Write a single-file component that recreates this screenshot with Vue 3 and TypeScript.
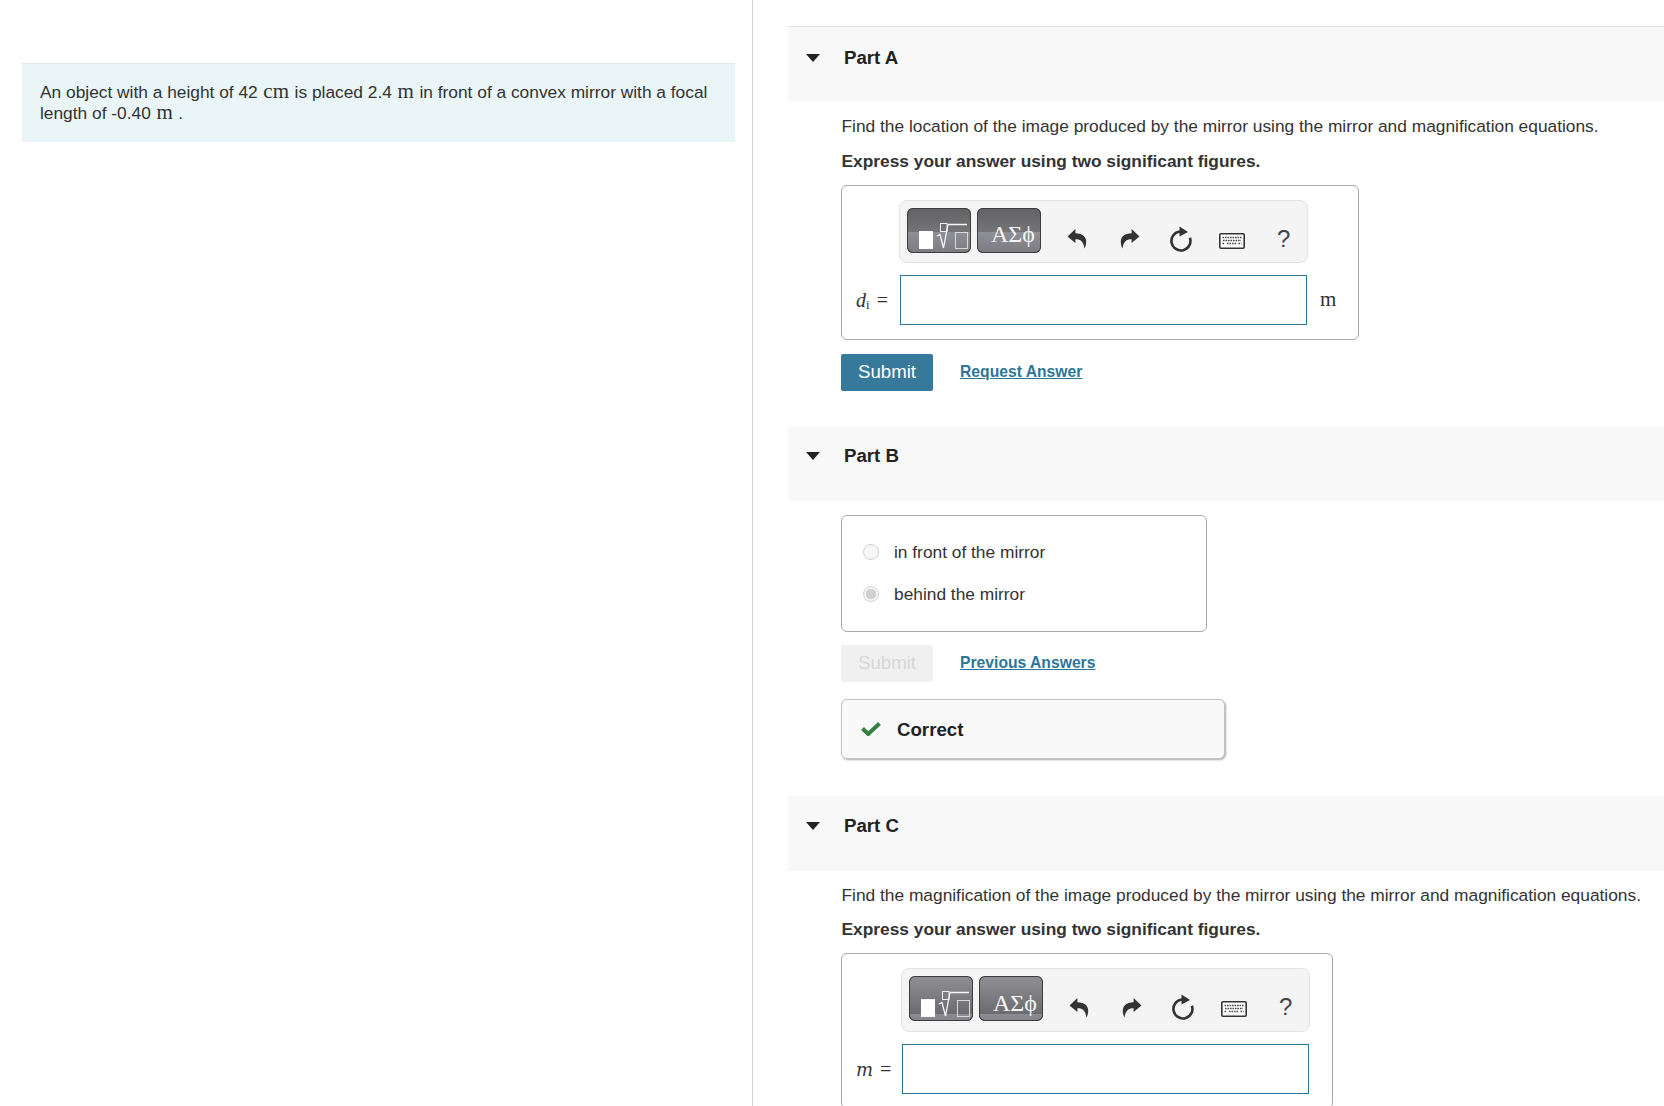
<template>
  <div class="page">
    <aside class="intro">
      <div class="intro__box">
        An object with a height of 42 <span class="unit">cm</span> is placed 2.4 <span class="unit">m</span> in front of a convex mirror with a focal length of -0.40 <span class="unit">m</span> .
      </div>
    </aside>

    <main class="parts">
      <section v-for="part in parts" :key="part.name" class="part">
        <header :class="['part__head', { 'part__head--first': part.name === 'Part A' }]">
          <span class="part__caret"></span>
          <h2 class="part__title">{{ part.name }}</h2>
        </header>

        <div class="part__body">
          <template v-if="part.kind === 'math'">
            <p class="prompt">{{ part.prompt }}</p>
            <p class="prompt prompt--strong">Express your answer using two significant figures.</p>

            <div :class="['answer', `answer--${part.id}`]">
              <div :class="['toolbar', `toolbar--${part.id}`]">
                <span class="tpl tpl--root">
                  <svg width="64" height="45" viewBox="0 0 64 45">
                    <rect x="12" y="23" width="14" height="18" fill="#fff" />
                    <rect x="33.5" y="15.5" width="6.5" height="8" fill="none" stroke="#eee" />
                    <path d="M30 28 L33 26.5 L36.5 40 L41 16.5 H60" fill="none" stroke="#f6f6f6" stroke-width="1.3" />
                    <rect x="48.5" y="24.5" width="12" height="16" fill="none" stroke="#d8d8da" />
                  </svg>
                </span>
                <span class="tpl tpl--greek">ΑΣϕ</span>

                <span class="tool">
                  <svg width="21" height="21" viewBox="0 0 20 20"><path d="M8 1 L0.5 8.2 L8 14.2 V10.8 C12.5 10.6 15.6 12.6 16.6 19.6 C20.4 12.2 18 5.2 8 5 Z" fill="#333" /></svg>
                </span>
                <span class="tool">
                  <svg class="flip" width="21" height="21" viewBox="0 0 20 20"><path d="M8 1 L0.5 8.2 L8 14.2 V10.8 C12.5 10.6 15.6 12.6 16.6 19.6 C20.4 12.2 18 5.2 8 5 Z" fill="#333" /></svg>
                </span>
                <span class="tool">
                  <svg width="24" height="26" viewBox="0 0 24 26">
                    <path d="M20.9 11.8 A9.5 9.5 0 1 1 11 5.5" fill="none" stroke="#333" stroke-width="2.6" />
                    <path d="M10.5 0.5 L19 6 L10.5 10.5 Z" fill="#333" />
                  </svg>
                </span>
                <span class="tool tool--keys">
                  <svg width="26" height="16" viewBox="0 0 26 16">
                    <rect x="0.8" y="0.8" width="24.4" height="14.4" rx="1.2" fill="#fff" stroke="#333" stroke-width="1.6" />
                    <path d="M3.5 4.5 H22.5 M4 7.5 H22 M3.5 10.5 H6 M8 10.5 H17.5 M19.5 10.5 H22.5" fill="none" stroke="#444" stroke-width="1.4" stroke-dasharray="1.6 0.9" />
                  </svg>
                </span>
                <span class="tool tool--help">?</span>
              </div>

              <label class="answer__label"><i>{{ part.symbol }}</i><sub v-if="part.sub">{{ part.sub }}</sub> <span class="answer__eq">=</span></label>
              <input class="answer__input" type="text" aria-label="answer" />
              <span class="unit answer__unit">{{ part.unit }}</span>
            </div>

            <div v-if="part.action" class="actions">
              <button class="btn" type="button">Submit</button>
              <a class="actions__link" href="#">{{ part.action }}</a>
            </div>
          </template>

          <template v-else>
            <div class="choices">
              <label v-for="c in part.choices" :key="c.text" class="choice">
                <span :class="['radio', { 'radio--on': c.on }]"></span>
                {{ c.text }}
              </label>
            </div>

            <div class="actions actions--tight">
              <button class="btn btn--off" type="button" disabled>Submit</button>
              <a class="actions__link" href="#">{{ part.action }}</a>
            </div>

            <div class="result">
              <svg width="20" height="15" viewBox="0 0 20 15"><path d="M1.5 7.5 L7.2 13 L18.5 2.5" fill="none" stroke="#34813f" stroke-width="4" /></svg>
              <strong>Correct</strong>
            </div>
          </template>
        </div>
      </section>
    </main>
  </div>
</template>

<script setup lang="ts">
interface Choice {
  text: string
  on: boolean
}

interface Part {
  id: string
  name: string
  kind: 'math' | 'choice'
  prompt?: string
  symbol?: string
  sub?: string
  unit?: string
  action?: string
  choices?: Choice[]
}

const parts: Part[] = [
  {
    id: 'a',
    name: 'Part A',
    kind: 'math',
    prompt: 'Find the location of the image produced by the mirror using the mirror and magnification equations.',
    symbol: 'd',
    sub: 'i',
    unit: 'm',
    action: 'Request Answer'
  },
  {
    id: 'b',
    name: 'Part B',
    kind: 'choice',
    action: 'Previous Answers',
    choices: [
      { text: 'in front of the mirror', on: false },
      { text: 'behind the mirror', on: true }
    ]
  },
  {
    id: 'c',
    name: 'Part C',
    kind: 'math',
    prompt: 'Find the magnification of the image produced by the mirror using the mirror and magnification equations.',
    symbol: 'm'
  }
]
</script>

<style>
html,
body {
  margin: 0;
  background: #fff;
  overflow: hidden;
}
</style>

<style scoped>
.page {
  display: flex;
  height: 1106px;
  overflow: hidden;
  font-family: "Liberation Sans", Arial, sans-serif;
  font-size: 17.33px;
  color: #333;
}

.intro {
  box-sizing: border-box;
  flex: 0 0 753px;
  padding: 63px 17px 0 22px;
  border-right: 1px solid #ccd2d6;
}

.intro__box {
  box-sizing: border-box;
  height: 79px;
  padding: 18px 20px 0 18px;
  background: #e9f5f7;
  border-top: 1px solid #dfe8ea;
  line-height: 21px;
}

.intro__box .unit {
  padding: 0 0.8px;
  line-height: 0;
}

.unit {
  font-family: "Liberation Serif", "Times New Roman", serif;
  font-size: 21px;
}

.parts {
  flex: 1;
  min-width: 0;
  padding: 26px 0 0 35px;
}

.part__head {
  box-sizing: border-box;
  display: flex;
  align-items: flex-start;
  height: 75px;
  padding-top: 19px;
  background: #f8f8f8;
}

.part__head--first {
  height: 76px;
  padding-top: 20px;
  border-top: 1px solid #e2e2e2;
}

.part__caret {
  margin: 7px 24px 0 18px;
  border-left: 7px solid transparent;
  border-right: 7px solid transparent;
  border-top: 8px solid #222;
}

.part__title {
  margin: 0;
  font-size: 18.67px;
  line-height: 21px;
  font-weight: 700;
  color: #222;
}

.part__body {
  padding-left: 53px;
}

.prompt {
  margin: 0;
  padding: 12px 0 0 0.5px;
  line-height: 24px;
  white-space: nowrap;
}

.prompt--strong {
  padding-top: 11px;
  font-weight: 700;
}

.part:last-child .prompt--strong {
  padding-top: 10px;
}

.answer {
  box-sizing: border-box;
  display: grid;
  grid-template-columns: 43px 409px 1fr;
  row-gap: 12px;
  align-items: center;
  margin-top: 12px;
  padding: 14px 0 14px 14px;
  border: 1px solid #aaa;
  border-radius: 6px;
}

.answer--a {
  width: 518px;
}

.answer--c {
  width: 492px;
  grid-template-columns: 45px 409px 1fr;
}

.toolbar {
  box-sizing: border-box;
  grid-column: 2;
  grid-row: 1;
  display: flex;
  align-items: center;
  height: 63px;
  padding: 7px 0 0 7px;
  background: #f4f4f4;
  border: 1px solid #e2e2e2;
  border-radius: 8px;
  align-self: start;
}

.toolbar--c {
  height: 64px;
}

.tpl {
  box-sizing: border-box;
  flex: none;
  align-self: flex-start;
  width: 64px;
  height: 45px;
  margin-right: 6px;
  border-radius: 6px;
  box-shadow: inset 0 0 0 1px #3c3c3e;
  overflow: hidden;
  background: linear-gradient(#626265 0, #757578 53%, #8f8f96 53%, #7b7b80 100%);
}

.toolbar--c .tpl {
  background: linear-gradient(#909094 0, #6c6c70 84%, #8b8b92 84%, #85858b 100%);
}

.tpl svg {
  display: block;
}

.tpl--greek {
  padding: 13px 0 0 14px;
  font-family: "Liberation Serif", "Times New Roman", serif;
  font-size: 24px;
  line-height: 27px;
  color: #f4f4f4;
}

.toolbar--c .tpl--greek {
  padding-top: 14px;
}

.tool {
  flex: 0 0 51.5px;
  display: flex;
  justify-content: center;
  align-items: center;
  height: 26px;
  margin-top: 7px;
}

.tool:nth-child(3) {
  margin-left: 5px;
}

.tool--keys svg {
  margin-top: 4px;
}

.tool--help {
  font-size: 24px;
  color: #444;
}

.flip {
  transform: scaleX(-1);
}

.answer__label {
  grid-column: 1;
  grid-row: 2;
  font-family: "Liberation Serif", "Times New Roman", serif;
  font-size: 20px;
  color: #333;
  white-space: nowrap;
}

.answer--c .answer__label i {
  font-family: "DejaVu Serif", serif;
  font-size: 18px;
}

.answer__label sub {
  font-size: 13px;
  line-height: 0;
  vertical-align: -2px;
}

.answer__eq {
  margin-left: 2px;
  font-size: 20px;
}

.answer__input {
  grid-column: 2;
  grid-row: 2;
  box-sizing: border-box;
  justify-self: center;
  width: 407px;
  height: 50px;
  margin: 0;
  padding: 0 8px;
  background: #fff;
  border: 1px solid #2e7699;
  border-radius: 0;
  outline: none;
}

.answer__unit {
  grid-column: 3;
  grid-row: 2;
  padding: 0 0 2px 12px;
  color: #333;
}

.actions {
  display: flex;
  align-items: center;
  margin-top: 14px;
  margin-bottom: 35px;
}

.actions--tight {
  margin-top: 13px;
  margin-bottom: 0;
}

.btn {
  width: 92px;
  height: 37px;
  padding: 0 0 2px;
  margin-right: 27px;
  background: #37799b;
  border: 0;
  border-radius: 2px;
  font-family: inherit;
  font-size: 18.67px;
  color: #fff;
}

.btn--off {
  background: #f0f0f0;
  color: #d6d6d6;
}

.actions__link {
  margin-top: -2px;
  font-size: 15.7px;
  font-weight: 700;
  color: #2e7699;
}

.choices {
  box-sizing: border-box;
  width: 366px;
  height: 117px;
  margin-top: 14px;
  padding-top: 15px;
  border: 1px solid #aaa;
  border-radius: 6px;
}

.choice {
  display: flex;
  align-items: center;
  gap: 15px;
  height: 42px;
  padding-left: 21px;
}

.radio {
  box-sizing: border-box;
  flex: none;
  width: 16px;
  height: 16px;
  background: #f7f7f7;
  border: 1px solid #d0d0d0;
  border-radius: 50%;
}

.radio--on {
  background: radial-gradient(circle, #d0d0d0 0 5px, #f7f7f7 5.6px);
}

.result {
  box-sizing: border-box;
  display: flex;
  align-items: center;
  gap: 16px;
  width: 384px;
  height: 60px;
  margin: 17px 0 37px;
  padding-left: 19px;
  background: #f9f9f9;
  border: 1px solid #c4c4c4;
  border-radius: 6px;
  box-shadow: 1px 1px 2px #aaa;
}

.result svg {
  margin-top: -2px;
}

.result strong {
  padding-top: 1px;
  font-size: 18.67px;
  color: #222;
}
</style>
